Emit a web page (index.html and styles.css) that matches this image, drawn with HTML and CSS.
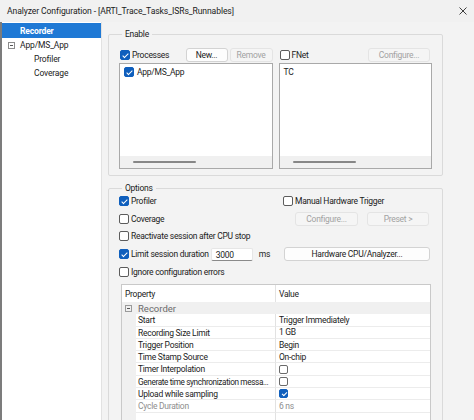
FILE: index.html
```html
<!doctype html>
<html>
    <head>
        <meta charset="utf-8">
        <title>Analyzer Configuration</title>
        <meta name="viewport" content="width=device-width, initial-scale=1">
        <link rel="stylesheet" href="styles.css">
    </head>
    <body>
        <div class="window">
            <div class="titlebar">
                <span class="title">Analyzer Configuration - [ARTI_Trace_Tasks_ISRs_Runnables]</span>
                <svg class="close" width="8" height="8" viewBox="0 0 8 8">
                    <path d="M0.5 0.5 L7.5 7.5 M7.5 0.5 L0.5 7.5" stroke="#2b2b2b" stroke-width="0.9" fill="none"/>
                </svg>
            </div>
            <div class="main">
                <ul class="tree">
                    <li class="node selected">Recorder</li>
                    <li class="node parent"><span class="expander"></span>App/MS_App</li>
                    <li class="node child">Profiler</li>
                    <li class="node child">Coverage</li>
                </ul>
                <div class="content">
                    <fieldset class="group">
                        <legend>Enable</legend>
                        <div class="enable-grid">
                            <div class="list-head">
                                <span class="check"><span class="box checked"></span>Processes</span>
                                <span class="spacer"></span>
                                <button class="btn btn-new">New...</button>
                                <button class="btn btn-remove" disabled>Remove</button>
                            </div>
                            <div class="list-head">
                                <span class="check"><span class="box"></span>FNet</span>
                                <span class="spacer"></span>
                                <button class="btn btn-configure" disabled>Configure...</button>
                            </div>
                            <div class="listbox">
                                <div class="list-items">
                                    <span class="check item"><span class="box checked"></span>App/MS_App</span>
                                </div>
                                <div class="hscroll"><span class="thumb"></span></div>
                            </div>
                            <div class="listbox">
                                <div class="list-items">
                                    <span class="item">TC</span>
                                </div>
                                <div class="hscroll"><span class="thumb"></span></div>
                            </div>
                        </div>
                    </fieldset>

                    <fieldset class="group options">
                        <legend>Options</legend>
                        <div class="options-grid">
                            <span class="check"><span class="box checked"></span>Profiler</span>
                            <span class="check"><span class="box"></span>Manual Hardware Trigger</span>

                            <span class="check"><span class="box"></span>Coverage</span>
                            <div class="btn-row">
                                <button class="btn btn-hw-configure" disabled>Configure...</button>
                                <button class="btn btn-preset" disabled>Preset &gt;</button>
                            </div>

                            <span class="check"><span class="box"></span>Reactivate session after CPU stop</span>
                            <span></span>

                            <div class="duration">
                                <span class="check"><span class="box checked"></span>Limit session duration</span>
                                <span class="input">3000</span>
                                <span class="unit">ms</span>
                            </div>
                            <div class="btn-row">
                                <button class="btn btn-hardware">Hardware CPU/Analyzer...</button>
                            </div>

                            <span class="check"><span class="box"></span>Ignore configuration errors</span>
                            <span></span>
                        </div>

                        <div class="props">
                            <div class="props-head">
                                <div class="head-name">Property</div>
                                <div class="head-value">Value</div>
                            </div>
                            <div class="props-category">
                                <span class="expander"></span>Recorder
                            </div>
                            <div class="prop-row">
                                <div class="gutter"></div>
                                <div class="name">Start</div>
                                <div class="value">Trigger Immediately</div>
                            </div>
                            <div class="prop-row">
                                <div class="gutter"></div>
                                <div class="name">Recording Size Limit</div>
                                <div class="value">1 GB</div>
                            </div>
                            <div class="prop-row">
                                <div class="gutter"></div>
                                <div class="name">Trigger Position</div>
                                <div class="value">Begin</div>
                            </div>
                            <div class="prop-row">
                                <div class="gutter"></div>
                                <div class="name">Time Stamp Source</div>
                                <div class="value">On-chip</div>
                            </div>
                            <div class="prop-row">
                                <div class="gutter"></div>
                                <div class="name">Timer Interpolation</div>
                                <div class="value"><span class="box small"></span></div>
                            </div>
                            <div class="prop-row">
                                <div class="gutter"></div>
                                <div class="name tight">Generate time synchronization messa...</div>
                                <div class="value"><span class="box small"></span></div>
                            </div>
                            <div class="prop-row">
                                <div class="gutter"></div>
                                <div class="name">Upload while sampling</div>
                                <div class="value"><span class="box small checked"></span></div>
                            </div>
                            <div class="prop-row readonly">
                                <div class="gutter"></div>
                                <div class="name">Cycle Duration</div>
                                <div class="value">6 ns</div>
                            </div>
                            <div class="prop-row">
                                <div class="gutter"></div>
                                <div class="name"></div>
                                <div class="value"></div>
                            </div>
                        </div>
                    </fieldset>
                </div>
            </div>
        </div>
    </body>
</html>
```

FILE: styles.css
```css
html,
body {
    margin: 0;
    padding: 0;
}

body {
    font-family: Roboto, "Liberation Sans", sans-serif;
    font-size: 8.5px;
    letter-spacing: -0.27px;
    color: #1b1b1b;
    background: #f3f3f3;
}

.window {
    width: 474px;
    height: 420px;
    overflow: hidden;
    display: flex;
    flex-direction: column;
}

/* title bar */
.titlebar {
    height: 22px;
    flex: none;
    display: flex;
    align-items: center;
    padding: 0 7px;
    background: #f1f1f1;
}
.title {
    flex: 1;
    font-size: 8.6px;
    letter-spacing: -0.1px;
    white-space: nowrap;
}
.close {
    margin-top: -1px;
}

.main {
    flex: 1;
    display: flex;
    min-height: 0;
    border-left: 2px solid #7c7c7c;
}

/* navigation tree */
.tree {
    width: 99px;
    flex: none;
    margin: 0;
    padding: 1px 0 0;
    list-style: none;
    background: #fff;
    border-right: 1px solid #e2e2e2;
}
.node {
    height: 14px;
    display: flex;
    align-items: center;
    padding-left: 18px;
    white-space: nowrap;
    letter-spacing: -0.15px;
}
.node.selected {
    height: 15px;
    background: #1f79d5;
    color: #fff;
    font-weight: bold;
}
.node.parent {
    padding-left: 6px;
}
.node.child {
    padding-left: 32px;
}
.expander {
    width: 7px;
    height: 7px;
    box-sizing: border-box;
    border: 1px solid #8c8c8c;
    margin-right: 5px;
    display: flex;
    align-items: center;
    justify-content: center;
    flex: none;
}
.expander::before {
    content: '';
    width: 3px;
    height: 1px;
    background: #555;
}

/* group boxes */
.content {
    flex: 1;
    padding: 6px 31px 0 6px;
    min-width: 0;
}
.group {
    margin: 0;
    padding: 8px 10px 6px;
    border: 1px solid #dadada;
    border-radius: 2px;
    min-width: 0;
}
.group legend {
    padding: 0 3px;
    margin-left: 3px;
    line-height: 12px;
}
.group.options {
    margin-top: 6px;
    padding-top: 0;
    padding-bottom: 40px;
}

/* checkboxes */
.check {
    display: flex;
    align-items: center;
    white-space: nowrap;
}
.box {
    width: 10px;
    height: 10px;
    box-sizing: border-box;
    border: 1px solid #5c5c5c;
    border-radius: 2px;
    background: #fff;
    margin-right: 2px;
    position: relative;
    flex: none;
}
.box.checked {
    background: #0f5fbd;
    border-color: #0f5fbd;
}
.box.checked::after {
    content: '';
    position: absolute;
    left: 3px;
    top: 1px;
    width: 2px;
    height: 5px;
    border: solid #fff;
    border-width: 0 1px 1px 0;
    transform: rotate(45deg);
}
.box.small {
    width: 9px;
    height: 9px;
    border-color: #6a6a6a;
}
.box.small.checked {
    border-color: #0f5fbd;
}
.box.small.checked::after {
    left: 3px;
    top: 1px;
    height: 4px;
}

/* buttons */
.btn {
    font: inherit;
    letter-spacing: inherit;
    color: #1b1b1b;
    height: 14px;
    padding: 0;
    margin: 0;
    background: #fdfdfd;
    border: 1px solid #d3d3d3;
    border-radius: 3px;
    text-align: center;
}
.btn:disabled {
    color: #a2a2a2;
    background: #f5f5f5;
    border-color: #e4e4e4;
}

/* enable section */
.enable-grid {
    display: grid;
    grid-template-columns: 1fr 1fr;
    grid-template-rows: 14px 106px;
    column-gap: 6px;
    row-gap: 1px;
}
.list-head {
    display: flex;
    align-items: center;
}
.list-head .check {
    margin-left: 1px;
}
.spacer {
    flex: 1;
}
.btn-new {
    width: 42px;
    margin-right: 2px;
}
.btn-remove {
    width: 43px;
}
.btn-configure {
    width: 62px;
    margin-right: 2px;
}
.listbox {
    display: flex;
    flex-direction: column;
    border: 1px solid #a9a9a9;
    background: #fff;
}
.list-items {
    flex: 1;
    padding: 1px 4px 0;
}
.item {
    height: 14px;
    display: flex;
    align-items: center;
}
.item .box {
    margin-right: 3px;
}
.hscroll {
    height: 12px;
    background: #f0f0f0;
    display: flex;
    align-items: center;
}
.thumb {
    margin-left: 13px;
    width: 63px;
    height: 2px;
    border-radius: 1px;
    background: #868686;
}

/* options section */
.options-grid {
    display: grid;
    grid-template-columns: 164px 1fr;
    grid-auto-rows: 17.75px;
    align-items: center;
    margin-top: -2px;
}
.btn-row {
    display: flex;
    align-items: center;
}
.btn-hw-configure {
    width: 63px;
    margin-left: 12px;
}
.btn-preset {
    width: 62px;
    margin-left: 9px;
}
.btn-hardware {
    width: 146px;
    margin-left: 1px;
}
.duration {
    display: flex;
    align-items: center;
}
.input {
    width: 42px;
    height: 13px;
    box-sizing: border-box;
    margin-left: 2px;
    padding-left: 4px;
    line-height: 12px;
    background: #fff;
    border: 1px solid #e6e6e6;
    border-bottom-color: #8a8a8a;
    border-radius: 2px;
}
.unit {
    margin-left: 6px;
}

/* property grid */
.props {
    margin: 3px 1px 0 2px;
    border: 1px solid #c9c9c9;
    background: #fff;
}
.props-head {
    height: 17px;
    display: flex;
}
.head-name {
    width: 150px;
    padding-left: 3px;
    line-height: 18px;
    border-right: 1px solid #e2e2e2;
}
.head-value {
    flex: 1;
    padding-left: 3px;
    line-height: 18px;
}
.props-category {
    height: 12.5px;
    display: flex;
    align-items: center;
    padding-left: 3px;
    background: #f0f0f0;
    color: #6b6b6b;
    font-size: 9.5px;
    letter-spacing: 0;
}
.props-category .expander {
    margin-right: 6px;
    border-color: #9a9a9a;
}
.prop-row {
    height: 12.3px;
    display: flex;
}
.gutter {
    width: 14px;
    flex: none;
    background: #f0f0f0;
}
.prop-row .name {
    width: 140px;
    flex: none;
    box-sizing: border-box;
    padding-left: 2px;
    line-height: 12px;
    white-space: nowrap;
    border-right: 1px solid #e2e2e2;
    border-bottom: 1px solid #ececec;
}
.prop-row .name.tight {
    font-size: 8.2px;
    letter-spacing: -0.35px;
}
.prop-row .value {
    flex: 1;
    padding-left: 3px;
    line-height: 12px;
    display: flex;
    align-items: center;
    border-bottom: 1px solid #ececec;
}
.prop-row.readonly {
    color: #8e8e8e;
}
```
